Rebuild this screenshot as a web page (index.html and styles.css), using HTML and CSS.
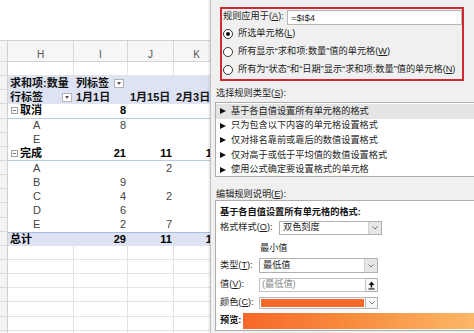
FILE: index.html
```html
<!DOCTYPE html>
<html lang="zh-CN">
<head>
<meta charset="utf-8">
<link rel="stylesheet" href="styles.css">
</head>
<body>
<div class="sheet">
  <div class="formula"></div>
  <div class="row colhead">
    <div class="rh"></div><div class="ch">H</div><div class="ch">I</div><div class="ch">J</div><div class="ch">K</div><div class="ch"></div>
  </div>
  <div class="row g"><div class="rh"></div><div class="c"></div><div class="c"></div><div class="c"></div><div class="c"></div><div class="c"></div></div>
  <div class="row pv band hd">
    <div class="rh"></div>
    <div class="c">求和项:数量</div>
    <div class="c">列标签<span class="filt f1"></span></div>
    <div class="c"></div><div class="c"></div><div class="c"></div>
  </div>
  <div class="row pv band hd">
    <div class="rh"></div>
    <div class="c">行标签<span class="filt f2"></span></div>
    <div class="c">1月1日</div>
    <div class="c">1月15日</div>
    <div class="c">2月3日</div>
    <div class="c"></div>
  </div>
  <div class="row pv grp">
    <div class="rh"></div>
    <div class="c"><span class="minus"></span>取消</div>
    <div class="c num">8</div><div class="c num"></div><div class="c num">5</div><div class="c"></div>
  </div>
  <div class="row pv item">
    <div class="rh"></div><div class="c lbl">A</div>
    <div class="c num">8</div><div class="c num"></div><div class="c num"></div><div class="c"></div>
  </div>
  <div class="row pv item">
    <div class="rh"></div><div class="c lbl">E</div>
    <div class="c num"></div><div class="c num"></div><div class="c num"></div><div class="c"></div>
  </div>
  <div class="row pv grp">
    <div class="rh"></div>
    <div class="c"><span class="minus"></span>完成</div>
    <div class="c num">21</div><div class="c num">11</div><div class="c num">13</div><div class="c"></div>
  </div>
  <div class="row pv item">
    <div class="rh"></div><div class="c lbl">A</div>
    <div class="c num"></div><div class="c num">2</div><div class="c num"></div><div class="c"></div>
  </div>
  <div class="row pv item">
    <div class="rh"></div><div class="c lbl">B</div>
    <div class="c num">9</div><div class="c num"></div><div class="c num">9</div><div class="c"></div>
  </div>
  <div class="row pv item">
    <div class="rh"></div><div class="c lbl">C</div>
    <div class="c num">4</div><div class="c num">2</div><div class="c num"></div><div class="c"></div>
  </div>
  <div class="row pv item">
    <div class="rh"></div><div class="c lbl">D</div>
    <div class="c num">6</div><div class="c num"></div><div class="c num">4</div><div class="c"></div>
  </div>
  <div class="row pv item">
    <div class="rh"></div><div class="c lbl">E</div>
    <div class="c num">2</div><div class="c num">7</div><div class="c num"></div><div class="c"></div>
  </div>
  <div class="row pv tot">
    <div class="rh"></div>
    <div class="c">总计</div>
    <div class="c num">29</div><div class="c num">11</div><div class="c num">18</div><div class="c"></div>
  </div>
  <div class="row g"><div class="rh"></div><div class="c"></div><div class="c"></div><div class="c"></div><div class="c"></div><div class="c"></div></div>
  <div class="row g"><div class="rh"></div><div class="c"></div><div class="c"></div><div class="c"></div><div class="c"></div><div class="c"></div></div>
  <div class="row g"><div class="rh"></div><div class="c"></div><div class="c"></div><div class="c"></div><div class="c"></div><div class="c"></div></div>
  <div class="row g"><div class="rh"></div><div class="c"></div><div class="c"></div><div class="c"></div><div class="c"></div><div class="c"></div></div>
  <div class="row g"><div class="rh"></div><div class="c"></div><div class="c"></div><div class="c"></div><div class="c"></div><div class="c"></div></div>
  <div class="row g"><div class="rh"></div><div class="c"></div><div class="c"></div><div class="c"></div><div class="c"></div><div class="c"></div></div>
  <div class="row g"><div class="rh"></div><div class="c"></div><div class="c"></div><div class="c"></div><div class="c"></div><div class="c"></div></div>
</div>

<div class="dlg">
  <div class="rbox">
    <div class="applyrow">
      <span class="alb">规则应用于(<u>A</u>):</span>
      <div class="inp">=$I$4</div>
    </div>
    <div class="radio on"><span class="dot"></span>所选单元格(<u>L</u>)</div>
    <div class="radio"><span class="dot"></span>所有显示“求和项:数量”值的单元格(<u>W</u>)</div>
    <div class="radio"><span class="dot"></span>所有为“状态”和“日期”显示“求和项:数量”值的单元格(<u>N</u>)</div>
  </div>
  <div class="sec">选择规则类型(<u>S</u>):</div>
  <div class="list">
    <div class="li sel"><span class="tri"></span>基于各自值设置所有单元格的格式</div>
    <div class="li"><span class="tri"></span>只为包含以下内容的单元格设置格式</div>
    <div class="li"><span class="tri"></span>仅对排名靠前或靠后的数值设置格式</div>
    <div class="li"><span class="tri"></span>仅对高于或低于平均值的数值设置格式</div>
    <div class="li"><span class="tri"></span>使用公式确定要设置格式的单元格</div>
  </div>
  <div class="sec2">编辑规则说明(<u>E</u>):</div>
  <div class="panel">
    <div class="ptitle">基于各自值设置所有单元格的格式:</div>
    <div class="prow r1">
      <span class="plb w59">格式样式(<u>O</u>):</span>
      <div class="dd w103"><span class="val">双色刻度</span><span class="arr gray"><svg width="6" height="4" viewBox="0 0 6 4"><polyline points="0.5,0.5 3,3 5.5,0.5" fill="none" stroke="#666" stroke-width="0.9"/></svg></span></div>
    </div>
    <div class="minlbl">最小值</div>
    <div class="prow r2">
      <span class="plb w39">类型(<u>T</u>):</span>
      <div class="dd w119"><span class="val">最低值</span><span class="arr gray"><svg width="6" height="4" viewBox="0 0 6 4"><polyline points="0.5,0.5 3,3 5.5,0.5" fill="none" stroke="#666" stroke-width="0.9"/></svg></span></div>
    </div>
    <div class="prow r3">
      <span class="plb w39">值(<u>V</u>):</span>
      <div class="tin">(最低值)</div>
      <div class="btn"><svg width="7" height="9" viewBox="0 0 7 9"><polygon points="3.5,0.5 6.5,4 4.3,4 4.3,6.5 2.7,6.5 2.7,4 0.5,4" fill="#111"/><rect x="0.5" y="7.4" width="6" height="1.1" fill="#111"/></svg></div>
    </div>
    <div class="prow r4">
      <span class="plb w39">颜色(<u>C</u>):</span>
      <div class="sw"><span class="swc"></span></div>
      <div class="btn"><svg width="6" height="4" viewBox="0 0 6 4"><polyline points="0.5,0.5 3,3 5.5,0.5" fill="none" stroke="#666" stroke-width="0.9"/></svg></div>
    </div>
    <div class="prow r5">
      <span class="plb w23 b">预览:</span>
      <div class="grad"></div>
    </div>
  </div>
</div>
</body>
</html>
```

FILE: styles.css
```css
* { box-sizing: border-box; margin: 0; padding: 0; }
html, body { width: 474px; height: 333px; overflow: hidden; }
body {
  position: relative;
  background: #fff;
  font-family: "Liberation Sans", "Noto Sans CJK SC", sans-serif;
}

/* ---------- spreadsheet ---------- */
.sheet { font-size: 11px; color: #000; }
.formula { height: 41px; border-bottom: 1px solid #d2d2d2; background: #fff; }

.row {
  display: grid;
  grid-template-columns: 8px 66px 54px 46px 46px 1fr;
  height: 14.15px;
}
.colhead { height: 21px; background: #f6f6f6; }
.colhead .ch {
  border-right: 1px solid #d6d6d6;
  border-bottom: 1px solid #d6d6d6;
  color: #555;
  font-size: 10px;
  display: flex;
  align-items: flex-end;
  justify-content: center;
  padding-bottom: 1px;
}
.rh {
  background: #f4f4f4;
  border-right: 1px solid #cfcfcf;
  border-bottom: 1px solid #dadada;
}
.c {
  display: flex;
  align-items: center;
  padding: 0 2px;
  white-space: nowrap;
  line-height: 1;
}
.g .c { border-right: 1px solid #e3e3e3; border-bottom: 1px solid #e3e3e3; }
.num { justify-content: flex-end; }

.band .c { background: #dde3f2; }
.hd .c { font-weight: bold; color: #111; }
.grp .c { font-weight: bold; border-bottom: 1px solid #b9c8e6; }
.item .c { color: #444; }
.item .lbl { padding-left: 25px; }
.tot .c { background: #dde3f2; border-top: 1px solid #a9bbe0; font-weight: bold; }

.minus {
  width: 7px; height: 7px;
  border: 1px solid #a0a0a0;
  margin: 0 2px 0 1px;
  background: linear-gradient(#777, #777) center / 3px 1px no-repeat;
}
.filt {
  width: 10px; height: 9px;
  border: 1px solid #b3b3b3;
  background: #fff;
  display: flex;
  align-items: center;
  justify-content: center;
}
.filt::after {
  content: "";
  border-left: 2.5px solid transparent;
  border-right: 2.5px solid transparent;
  border-top: 3px solid #555;
}
.f1 { margin-left: 5px; }
.f2 { margin-left: 19px; }

/* ---------- dialog ---------- */
.dlg {
  position: absolute;
  left: 210px; top: 0; right: 0; bottom: 0;
  background: #f0f0f0;
  border-left: 1px solid #c3c3c3;
  box-shadow: -1px 0 2px rgba(0,0,0,0.12);
  padding-left: 4px;
  font-size: 9.2px;
  color: #1e1e1e;
  overflow: hidden;
  line-height: 1.2;
}
.dlg u { text-decoration: underline; }

.rbox {
  margin: 7px 0 0 5px;
  width: 244px;
  border: 2px solid #d02a35;
  padding-left: 1px;
}
.applyrow { display: flex; align-items: center; height: 16px; }
.alb { width: 64px; }
.inp {
  flex: 1;
  height: 15px;
  margin-top: 1px;
  background: #fff;
  border: 1px solid #b5b5b5;
  padding-left: 3px;
  display: flex;
  align-items: center;
  font-size: 9.5px;
}
.radio { display: flex; align-items: center; height: 18px; white-space: nowrap; }
.dot {
  width: 10px; height: 10px;
  border-radius: 50%;
  border: 1px solid #333;
  background: #fff;
  margin-right: 5px;
  display: flex;
  align-items: center;
  justify-content: center;
  flex: none;
}
.radio.on .dot::after {
  content: "";
  width: 4px; height: 4px;
  border-radius: 50%;
  background: #111;
}

.sec { margin: 5px 0 0 1px; height: 14px; line-height: 14px; }
.list {
  margin-top: 2px;
  height: 75px;
  background: #fff;
  border: 1px solid #adadad;
  margin-right: -4px;
  padding-top: 1px;
}
.li { height: 14.6px; display: flex; align-items: center; padding-left: 4px; white-space: nowrap; }
.li.sel { background: #e4e4e4; }
.tri {
  width: 0; height: 0;
  border-left: 6px solid #111;
  border-top: 3.5px solid transparent;
  border-bottom: 3.5px solid transparent;
  margin-right: 5px;
}
.sec2 { margin: 11px 0 0 1px; height: 12px; line-height: 12px; }

.panel {
  height: 131px;
  background: #fff;
  border: 1px solid #adadad;
  margin-right: -4px;
  padding: 4px 0 0 4px;
}
.ptitle { height: 14px; line-height: 14px; font-weight: bold; color: #111; }
.prow { display: flex; align-items: center; }
.plb { flex: none; white-space: nowrap; }
.w59 { width: 59px; }
.w39 { width: 39px; }
.w23 { width: 23px; }
.b { font-weight: bold; color: #111; }
.r1 { margin-top: 2px; height: 14px; }
.minlbl { margin-top: 7px; height: 12px; line-height: 12px; padding-left: 40px; }
.r2 { margin-top: 4px; height: 15px; }
.r3 { margin-top: 5px; height: 14px; }
.r4 { margin-top: 5px; height: 12px; }
.r5 { margin-top: 4px; height: 16px; }

.dd { display: flex; height: 100%; border: 1px solid #b0b0b0; background: #fff; }
.w103 { width: 103px; }
.w119 { width: 119px; }
.dd .val { flex: 1; padding-left: 3px; display: flex; align-items: center; }
.arr { width: 13px; display: flex; align-items: center; justify-content: center; }
.arr.gray { background: #e6e6e6; border-left: 1px solid #d0d0d0; }

.tin {
  width: 107px; height: 100%;
  border: 1px solid #c2c2c2;
  background: #fff;
  color: #8a8a8a;
  padding-left: 2px;
  display: flex;
  align-items: center;
}
.btn {
  width: 12px; height: 100%;
  border: 1px solid #b0b0b0;
  border-left: none;
  background: #f7f7f7;
  display: flex;
  align-items: center;
  justify-content: center;
}
.sw {
  width: 107px; height: 100%;
  border: 1px solid #b8b8b8;
  background: #fff;
  padding: 1px;
  display: flex;
}
.swc { flex: 1; background: #f8692b; }
.grad {
  flex: 1;
  height: 100%;
  background: linear-gradient(90deg, #f7682a 0%, #f98b3c 45%, #fbb868 100%);
}
```
